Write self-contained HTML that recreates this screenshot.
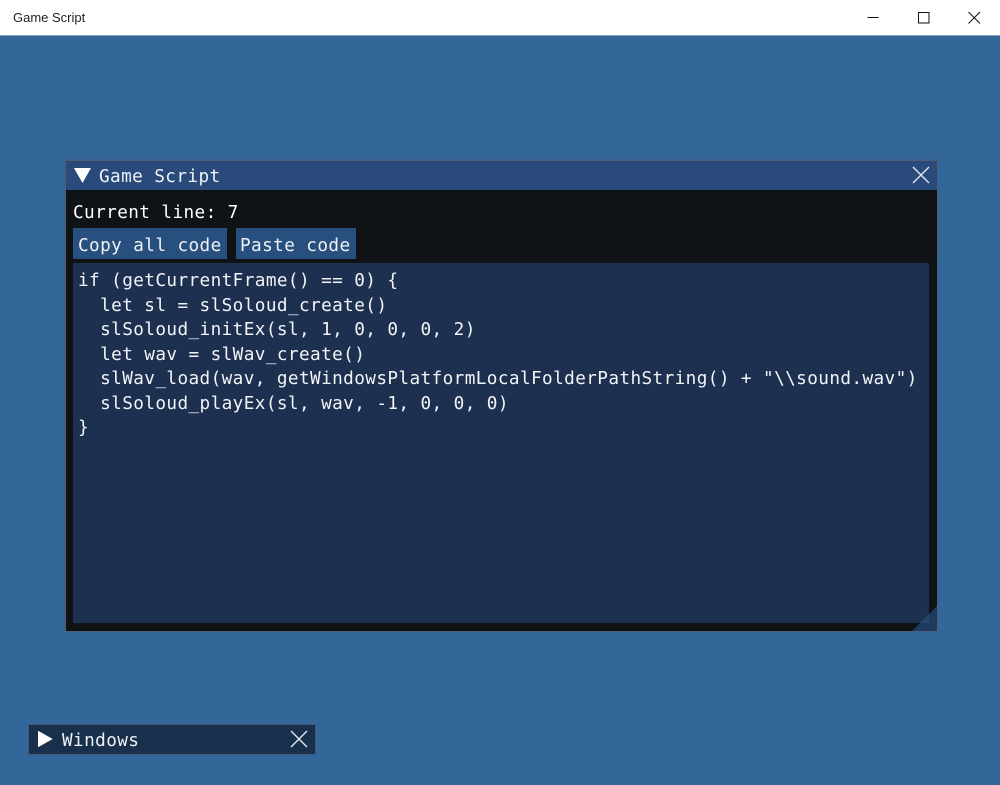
<!DOCTYPE html>
<html><head><meta charset="utf-8">
<style>
html,body{margin:0;padding:0;width:1000px;height:785px;overflow:hidden;background:#336699;}
div,span,svg{position:absolute;}
.m{font-family:"DejaVu Sans Mono","Liberation Mono",monospace;font-size:17.7px;letter-spacing:.4px;line-height:24px;white-space:pre;color:#fff;}
#w{left:0;top:0;width:1000px;height:785px;filter:blur(.35px);}
</style></head><body>
<div id="w">
<div style="left:0;top:0;width:1000px;height:35px;background:#fff;"></div>
<div style="left:0;top:35px;width:1000px;height:1px;background:#7f9fc0;"></div>
<div style="left:13px;top:9px;font-family:'Liberation Sans',sans-serif;font-size:13px;line-height:18px;color:#222;white-space:pre;">Game Script</div>
<svg style="left:860px;top:5px;" width="140" height="26" viewBox="0 0 140 26" fill="none" stroke="#111" stroke-width="1">
<path d="M7.500 12.500H18.500"/>
<rect x="58.500" y="7.500" width="10.500" height="10.500"/>
<path d="M108.500 7L120 18.500M120 7L108.500 18.500"/>
</svg>

<div style="left:65px;top:160px;width:873px;height:472px;background:#4f5f76;box-shadow:-1px -1px 0 #3a5f8c;"></div>
<div style="left:66px;top:161px;width:871px;height:29px;background:#2a4a7c;"></div>
<div style="left:66px;top:190px;width:871px;height:441px;background:#0f1316;"></div>
<svg style="left:66px;top:161px;" width="871" height="29" viewBox="0 0 871 29">
<path d="M8 7H25L16.500 22Z" fill="#fff"/>
<path d="M847 6L863 22M863 6L847 22" stroke="#e8edf3" stroke-width="1.300" fill="none"/>
</svg>
<div class="m" style="left:99px;top:165px;color:#eef1f5;">Game Script</div>
<div class="m" style="left:73px;top:201px;">Current line: 7</div>
<div style="left:73px;top:228px;width:154px;height:31px;background:#27507f;"></div>
<div style="left:236px;top:228px;width:120px;height:31px;background:#27507f;"></div>
<div class="m" style="left:78px;top:234px;color:#f0f2f5;">Copy all code</div>
<div class="m" style="left:240px;top:234px;color:#f0f2f5;">Paste code</div>
<div style="left:73px;top:263px;width:856px;height:360px;background:#1d3050;"></div>
<div class="m" style="left:78px;top:269px;color:#f2f4f7;">if (getCurrentFrame() == 0) {</div>
<div class="m" style="left:78px;top:294px;color:#f2f4f7;">  let sl = slSoloud_create()</div>
<div class="m" style="left:78px;top:318px;color:#f2f4f7;">  slSoloud_initEx(sl, 1, 0, 0, 0, 2)</div>
<div class="m" style="left:78px;top:343px;color:#f2f4f7;">  let wav = slWav_create()</div>
<div class="m" style="left:78px;top:367px;color:#f2f4f7;">  slWav_load(wav, getWindowsPlatformLocalFolderPathString() + "\\sound.wav")</div>
<div class="m" style="left:78px;top:392px;color:#f2f4f7;">  slSoloud_playEx(sl, wav, -1, 0, 0, 0)</div>
<div class="m" style="left:78px;top:416px;color:#f2f4f7;">}</div>
<svg style="left:912px;top:606px;" width="25" height="25" viewBox="0 0 25 25">
<path d="M25 0V25H0Z" fill="#1e3a5f"/>
<path d="M17 8V17H8Z" fill="#25466f"/>
</svg>

<div style="left:28px;top:724px;width:288px;height:31px;background:#3f5a7c;"></div>
<div style="left:29px;top:725px;width:286px;height:29px;background:#19304d;"></div>
<svg style="left:29px;top:725px;" width="286" height="29" viewBox="0 0 286 29">
<path d="M9 5.700V22.300L23.700 14Z" fill="#fff"/>
<path d="M262 6L278 22M278 6L262 22" stroke="#e8edf3" stroke-width="1.300" fill="none"/>
</svg>
<div class="m" style="left:62px;top:729px;color:#eef1f5;">Windows</div>
</div>
</body></html>
